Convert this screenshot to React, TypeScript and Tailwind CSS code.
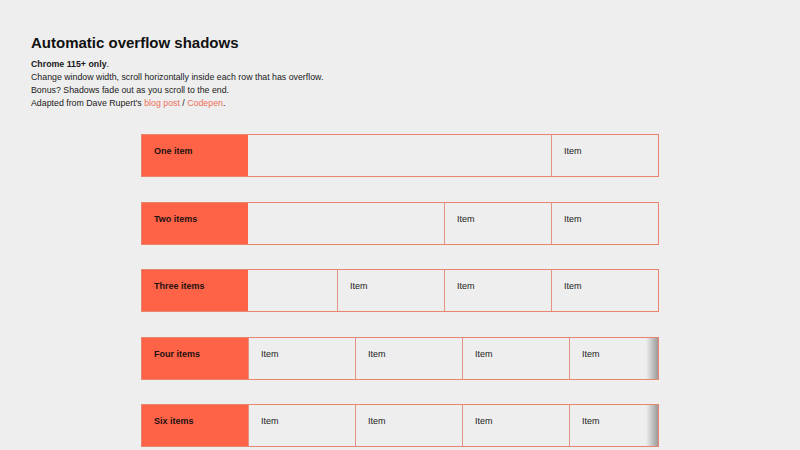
const rows = [
  { label: "One item", count: 1 },
  { label: "Two items", count: 2 },
  { label: "Three items", count: 3 },
  { label: "Four items", count: 4 },
  { label: "Six items", count: 6 },
];

function Row({ label, count }: { label: string; count: number }) {
  const overflow = count > 3;
  return (
    <div className="relative flex h-[43px] w-[518px] mx-auto border border-[#e9846f] overflow-hidden">
      <div className="shrink-0 w-[106px] bg-[#ff6347] px-[12px] pt-[10px] text-[9px] leading-[13px] font-bold text-[#1c1111]">
        {label}
      </div>
      <div
        className={
          overflow
            ? "flex flex-1 min-w-0 overflow-x-auto [scrollbar-width:none]"
            : "flex flex-1 min-w-0 justify-end"
        }
      >
        {Array.from({ length: count }).map((_, i) => (
          <div
            key={i}
            className="shrink-0 w-[107px] border-l border-[#e29384] px-[12px] pt-[10px] text-[9px] leading-[13px] text-[#222]"
          >
            Item
          </div>
        ))}
      </div>
      {overflow && (
        <div className="absolute right-0 top-0 bottom-0 w-[12px] bg-gradient-to-r from-transparent to-black/35" />
      )}
    </div>
  );
}

export default function App() {
  return (
    <div
      className="min-h-[450px] bg-[#eeeeee] text-[#1a1a1a] overflow-hidden"
      style={{ fontFamily: '"Liberation Sans", Arial, sans-serif' }}
    >
      <div className="px-[31px] pt-[34px]">
        <h1 className="text-[15px] leading-[18px] font-bold text-[#111]">Automatic overflow shadows</h1>
        <div className="mt-[6px] text-[8.8px] leading-[13px]">
          <p>
            <strong>Chrome 115+ only</strong>.
          </p>
          <p>Change window width, scroll horizontally inside each row that has overflow.</p>
          <p>Bonus? Shadows fade out as you scroll to the end.</p>
          <p>
            Adapted from Dave Rupert's <a className="text-[#ee6e58]">blog post</a> /{" "}
            <a className="text-[#ee6e58]">Codepen</a>.
          </p>
        </div>
      </div>
      <div className="mt-[24px] flex flex-col gap-[24.5px]">
        {rows.map((r) => (
          <Row key={r.label} label={r.label} count={r.count} />
        ))}
      </div>
    </div>
  );
}
